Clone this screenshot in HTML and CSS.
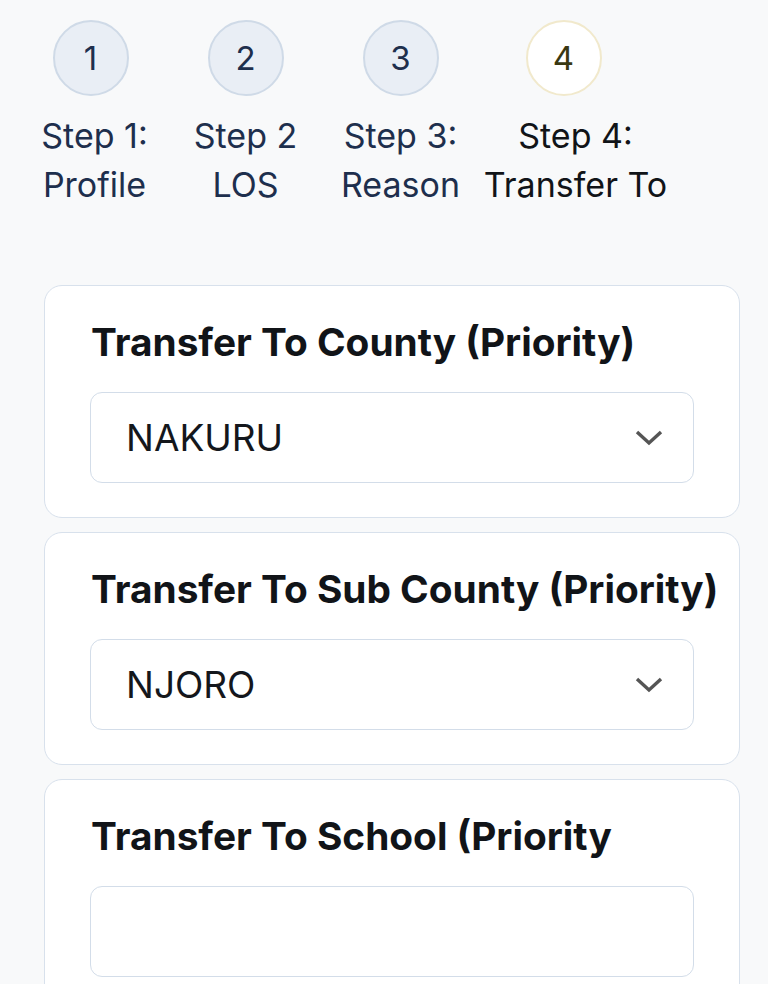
FILE: index.html
```html
<!DOCTYPE html>
<html lang="en">
<head>
  <meta charset="UTF-8" />
  <title>Transfer Request</title>
  <link rel="stylesheet" href="styles.css">
</head>
<body>
  <div class="steps">
    <div class="step first">
      <div class="step-circle">1</div>
      <div class="step-label">Step 1:<br>Profile</div>
    </div>
    <div class="step">
      <div class="step-circle">2</div>
      <div class="step-label">Step 2<br>LOS</div>
    </div>
    <div class="step">
      <div class="step-circle">3</div>
      <div class="step-label">Step 3:<br>Reason</div>
    </div>
    <div class="step active">
      <div class="step-circle">4</div>
      <div class="step-label">Step 4:<br>Transfer To</div>
    </div>
  </div>

  <div class="form">
    <div class="card">
      <div class="card-title">Transfer To County (Priority)</div>
      <div class="field">
        <span>NAKURU</span>
        <svg class="chevron" width="28" height="16" viewBox="0 0 28 16"><path d="M2 2 L14 13 L26 2" fill="none" stroke="#555" stroke-width="3.4"/></svg>
      </div>
    </div>

    <div class="card">
      <div class="card-title">Transfer To Sub County (Priority)</div>
      <div class="field">
        <span>NJORO</span>
        <svg class="chevron" width="28" height="16" viewBox="0 0 28 16"><path d="M2 2 L14 13 L26 2" fill="none" stroke="#555" stroke-width="3.4"/></svg>
      </div>
    </div>

    <div class="card">
      <div class="card-title">Transfer To School (Priority</div>
      <div class="field"></div>
    </div>
  </div>
</body>
</html>
```

FILE: styles.css
```css
body {
  margin: 0;
  background: #f8f9fa;
  font-family: Inter, "Noto Sans", sans-serif;
  height: 984px;
  overflow: hidden;
}

.steps {
  display: flex;
  padding: 20px 0 0 13px;
}

.step {
  width: 155px;
  display: flex;
  flex-direction: column;
  align-items: center;
}

.step-circle {
  width: 72px;
  height: 72px;
  border-radius: 50%;
  border: 2px solid #cfdae7;
  background: #e9eef5;
  color: #1e2f4d;
  font-size: 33px;
  display: flex;
  align-items: center;
  justify-content: center;
}

.step-label {
  margin-top: 15px;
  font-size: 34px;
  line-height: 49px;
  color: #1e2f4d;
  text-align: center;
  white-space: nowrap;
}

.step.first .step-label {
  margin-left: 8px;
}

.step.active {
  margin-left: 8px;
}

.step.active .step-circle {
  background: #fff;
  border-color: #f1e9cc;
  color: #3a3812;
}

.step.active .step-label {
  color: #111418;
  margin-left: 24px;
}

.form {
  margin: 76px 28px 0 44px;
  display: flex;
  flex-direction: column;
  gap: 14px;
}

.card {
  background: #fff;
  border: 1px solid #d8e1ec;
  border-radius: 18px;
  padding: 33px 45px 0 45px;
  box-sizing: border-box;
  height: 233px;
}

.card-title {
  font-size: 38.8px;
  font-weight: 700;
  line-height: 46px;
  color: #111418;
  white-space: nowrap;
  margin-left: 1px;
}

.field {
  margin-top: 27px;
  height: 91px;
  box-sizing: border-box;
  border: 1px solid #d3dde9;
  border-radius: 12px;
  padding: 0 30px 0 35px;
  display: flex;
  align-items: center;
  justify-content: space-between;
  font-size: 37px;
  color: #14171c;
}
```
